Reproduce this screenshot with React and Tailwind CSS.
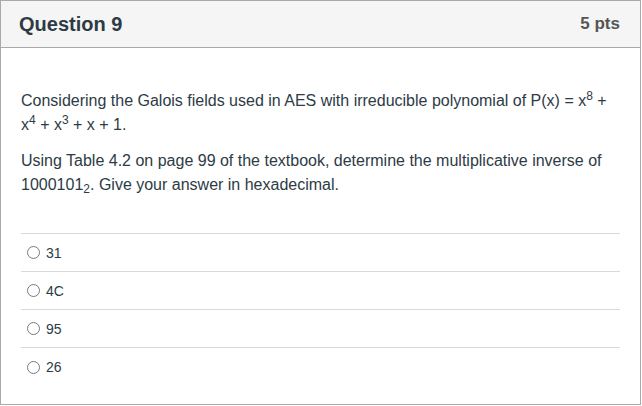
import React from "react";

const answers = ["31", "4C", "95", "26"];

export default function App() {
  return (
    <div className="w-[642px] h-[406px] bg-white" style={{ fontFamily: '"Liberation Sans", Arial, sans-serif' }}>
      <div className="w-[641px] h-[405px] border border-[#a9a9a9] bg-white flex flex-col">
        <div className="h-[47px] shrink-0 bg-[#f5f5f5] border-b border-[#a9a9a9] flex items-center justify-between pl-[18px] pr-[20px]">
          <span className="text-[20px] font-bold text-[#2d3b45]">Question 9</span>
          <span className="text-[17px] font-bold text-[#555555]">5 pts</span>
        </div>
        <div className="pt-[41px] px-[20px] text-[16px] leading-[24px] text-[#2d3b45]">
          <p>
            Considering the Galois fields used in AES with irreducible polynomial of P(x) = x<sup>8</sup> + x<sup>4</sup> + x<sup>3</sup> + x + 1.
          </p>
          <p className="mt-[12px]">
            Using Table 4.2 on page 99 of the textbook, determine the multiplicative inverse of 1000101<sub>2</sub>. Give your answer in hexadecimal.
          </p>
          <div className="mt-[36px] border-t border-[#d9d9d9]">
            {answers.map((a) => (
              <div key={a} className="h-[38px] border-b border-[#d9d9d9] last:border-b-0 flex items-center">
                <span className="ml-[6px] w-[13px] h-[13px] rounded-full border border-[#7a7a7a] bg-white shrink-0" />
                <span className="ml-[6px] text-[14px] text-[#2d3b45]">{a}</span>
              </div>
            ))}
          </div>
        </div>
      </div>
    </div>
  );
}
